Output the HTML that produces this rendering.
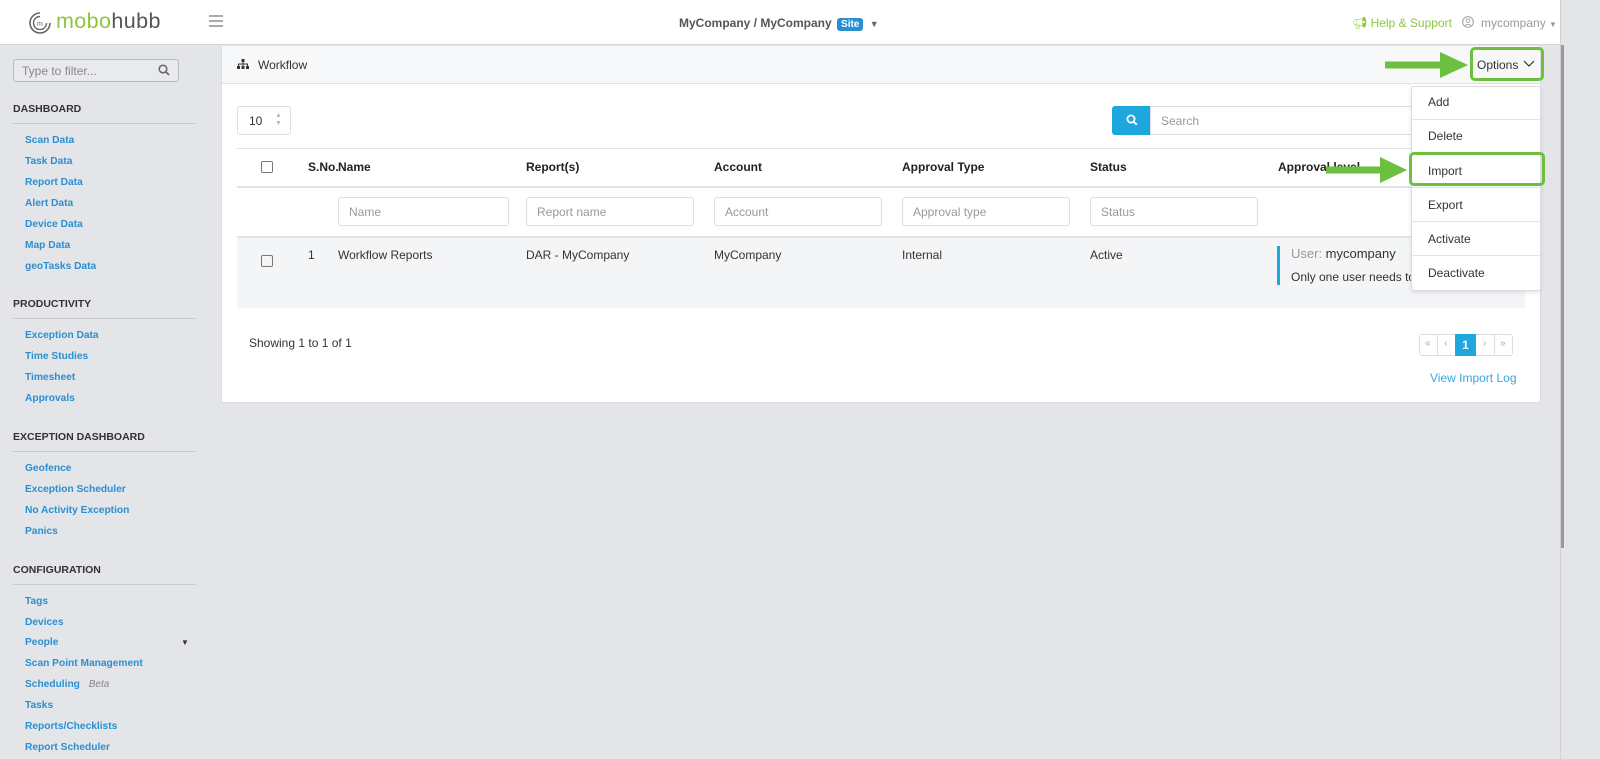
<!DOCTYPE html>
<html><head><meta charset="utf-8">
<style>
*{box-sizing:border-box;margin:0;padding:0}
body{width:1600px;height:759px;overflow:hidden;background:#e4e5e8;font-family:"Liberation Sans",Arial,sans-serif;position:relative;font-size:12px;color:#333}
.a{position:absolute;white-space:nowrap}
.hdr{left:0;top:0;width:1560px;height:45px;background:#fff;border-bottom:1px solid #d4d6da}
.sb a,.lnk{color:#2a8fd0;font-weight:bold;font-size:10.2px;text-decoration:none}
.sh{font-weight:bold;font-size:10.5px;color:#333}
.hl{height:1px;background:#c9cbcf;width:183px;left:13px}
.th{font-weight:bold;font-size:12px;color:#222}
.inp{height:29px;border:1px solid #dcdde0;border-radius:3px;background:#fff;color:#999;padding:7px 10px;font-size:12px}
.dd{font-size:12px;color:#333;left:1428px}
.sep{left:1412px;width:129px;height:1px;background:#e2e3e6}
</style></head><body>
<div class="a hdr"></div>
<svg class="a" style="left:28px;top:11px" width="24" height="24" viewBox="0 0 24 24"><path d="M12 2a10 10 0 1 0 10 10" fill="none" stroke="#666" stroke-width="1.6"/><path d="M12 5.5a6.5 6.5 0 1 0 6.5 6.5" fill="none" stroke="#666" stroke-width="1.4"/><text x="9" y="15" font-size="7" fill="#666" font-family="Liberation Sans">m</text></svg>
<div class="a" style="left:56px;top:9px;font-size:21.5px;letter-spacing:0.4px"><span style="color:#8cc63f">mobo</span><span style="color:#555">hubb</span></div>
<div class="a" style="left:209px;top:15px;width:14px;height:2px;background:#aaa;box-shadow:0 5px 0 #aaa,0 10px 0 #aaa"></div>
<div class="a" style="left:679px;top:16px;font-size:12px;font-weight:bold;color:#555">MyCompany / MyCompany <span style="background:#2a8fd0;color:#fff;border-radius:3px;padding:1px 4px;font-size:10px;margin-left:2px">Site</span> <span style="color:#666;font-size:9px;margin-left:3px">▼</span></div>
<div class="a" style="left:1352px;top:16px;color:#8cc63f;font-size:12px">📢︎ Help &amp; Support</div>
<svg class="a" style="left:1462px;top:16px" width="12" height="12" viewBox="0 0 12 12"><circle cx="6" cy="6" r="5.3" fill="none" stroke="#aaa" stroke-width="1.2"/><circle cx="6" cy="4.8" r="1.8" fill="none" stroke="#aaa"/><path d="M2.8 10c1-2 5.4-2 6.4 0" fill="none" stroke="#aaa"/></svg>
<div class="a" style="left:1481px;top:16px;color:#999;font-size:12px">mycompany <span style="font-size:8px">▼</span></div>
<div class="a" style="left:1560px;top:0;width:40px;height:759px;background:#e4e5e8;border-left:1px solid #d0d0d0"></div>
<div class="a" style="left:1561px;top:45px;width:3px;height:503px;background:#999"></div>

<div class="a" style="left:13px;top:59px;width:166px;height:23px;border:1px solid #b8babe;border-radius:3px;background:#e9eaed;color:#888;font-size:12px;padding:4px 8px">Type to filter...</div>
<svg class="a" style="left:158px;top:64px" width="12" height="12" viewBox="0 0 12 12"><circle cx="5" cy="5" r="3.8" fill="none" stroke="#666" stroke-width="1.5"/><path d="M8 8l3 3" stroke="#666" stroke-width="1.6"/></svg>
<div class="sb">
<div class="a sh" style="left:13px;top:103px">DASHBOARD</div><div class="a hl" style="top:123px"></div>
<a class="a" style="left:25px;top:135px">Scan Data</a><a class="a" style="left:25px;top:156px">Task Data</a><a class="a" style="left:25px;top:177px">Report Data</a><a class="a" style="left:25px;top:198px">Alert Data</a><a class="a" style="left:25px;top:219px">Device Data</a><a class="a" style="left:25px;top:240px">Map Data</a><a class="a" style="left:25px;top:261px">geoTasks Data</a>
<div class="a sh" style="left:13px;top:298px">PRODUCTIVITY</div><div class="a hl" style="top:318px"></div>
<a class="a" style="left:25px;top:330px">Exception Data</a><a class="a" style="left:25px;top:351px">Time Studies</a><a class="a" style="left:25px;top:372px">Timesheet</a><a class="a" style="left:25px;top:393px">Approvals</a>
<div class="a sh" style="left:13px;top:431px">EXCEPTION DASHBOARD</div><div class="a hl" style="top:451px"></div>
<a class="a" style="left:25px;top:463px">Geofence</a><a class="a" style="left:25px;top:484px">Exception Scheduler</a><a class="a" style="left:25px;top:505px">No Activity Exception</a><a class="a" style="left:25px;top:526px">Panics</a>
<div class="a sh" style="left:13px;top:564px">CONFIGURATION</div><div class="a hl" style="top:584px"></div>
<a class="a" style="left:25px;top:596px">Tags</a><a class="a" style="left:25px;top:617px">Devices</a><a class="a" style="left:25px;top:637px">People</a><a class="a" style="left:25px;top:658px">Scan Point Management</a><a class="a" style="left:25px;top:679px">Scheduling <i style="color:#888;font-weight:normal;font-size:10px;margin-left:6px">Beta</i></a><a class="a" style="left:25px;top:700px">Tasks</a><a class="a" style="left:25px;top:721px">Reports/Checklists</a><a class="a" style="left:25px;top:742px">Report Scheduler</a>
<div class="a" style="left:181px;top:638px;font-size:8px;color:#333">▼</div>
</div>

<div class="a" style="left:221px;top:46px;width:1320px;height:357px;background:#fff;border:1px solid #dcdde0;border-radius:3px"></div>
<div class="a" style="left:222px;top:46px;width:1318px;height:38px;background:#f7f8fa;border-bottom:1px solid #e0e1e4"></div>
<svg class="a" style="left:237px;top:59px" width="12" height="11" viewBox="0 0 12 11"><rect x="4.5" y="0" width="3" height="3" fill="#333"/><rect x="0" y="7" width="3" height="3" fill="#333"/><rect x="4.5" y="7" width="3" height="3" fill="#333"/><rect x="9" y="7" width="3" height="3" fill="#333"/><path d="M1.5 7V5h9v2M6 3v4" fill="none" stroke="#333"/></svg>
<div class="a" style="left:258px;top:58px;font-size:12px;color:#333">Workflow</div>
<div class="a" style="left:1477px;top:58px;font-size:12px;color:#333">Options</div>
<svg class="a" style="left:1523px;top:60px" width="12" height="8" viewBox="0 0 12 8"><path d="M1 1l5 5 5-5" fill="none" stroke="#333" stroke-width="1.2"/></svg>

<div class="a" style="left:237px;top:106px;width:54px;height:29px;border:1px solid #dcdde0;border-radius:3px;padding:7px 11px;font-size:12px">10<span style="position:absolute;left:37px;top:5px;font-size:7px;color:#bbb;line-height:8px">▲<br>▼</span></div>
<div class="a" style="left:1112px;top:106px;width:39px;height:29px;background:#1ea7dd;border-radius:3px 0 0 3px"></div>
<svg class="a" style="left:1126px;top:114px" width="12" height="12" viewBox="0 0 12 12"><circle cx="5" cy="5" r="3.6" fill="none" stroke="#fff" stroke-width="1.8"/><path d="M7.8 7.8l3 3" stroke="#fff" stroke-width="2"/></svg>
<div class="a" style="left:1150px;top:106px;width:280px;height:29px;border:1px solid #dcdde0;padding:7px 10px;color:#999;font-size:12px">Search</div>

<div class="a" style="left:237px;top:148px;width:1288px;height:1px;background:#e2e3e6"></div>
<div class="a" style="left:237px;top:186px;width:1288px;height:2px;background:#e2e3e6"></div>
<div class="a" style="left:237px;top:236px;width:1288px;height:2px;background:#e2e3e6"></div>
<div class="a" style="left:237px;top:238px;width:1288px;height:70px;background:#f4f5f7"></div>
<div class="a" style="left:261px;top:161px;width:12px;height:12px;border:1.5px solid #777;border-radius:2px"></div>
<div class="a" style="left:261px;top:255px;width:12px;height:12px;border:1.5px solid #777;border-radius:2px"></div>
<div class="a th" style="left:308px;top:160px">S.No.</div>
<div class="a th" style="left:338px;top:160px">Name</div>
<div class="a th" style="left:526px;top:160px">Report(s)</div>
<div class="a th" style="left:714px;top:160px">Account</div>
<div class="a th" style="left:902px;top:160px">Approval Type</div>
<div class="a th" style="left:1090px;top:160px">Status</div>
<div class="a th" style="left:1278px;top:160px">Approval level</div>
<div class="a inp" style="left:338px;top:197px;width:171px">Name</div>
<div class="a inp" style="left:526px;top:197px;width:168px">Report name</div>
<div class="a inp" style="left:714px;top:197px;width:168px">Account</div>
<div class="a inp" style="left:902px;top:197px;width:168px">Approval type</div>
<div class="a inp" style="left:1090px;top:197px;width:168px">Status</div>
<div class="a" style="left:308px;top:248px">1</div>
<div class="a" style="left:338px;top:248px">Workflow Reports</div>
<div class="a" style="left:526px;top:248px">DAR - MyCompany</div>
<div class="a" style="left:714px;top:248px">MyCompany</div>
<div class="a" style="left:902px;top:248px">Internal</div>
<div class="a" style="left:1090px;top:248px">Active</div>
<div class="a" style="left:1277px;top:246px;width:3px;height:39px;background:#1ea7dd"></div>
<div class="a" style="left:1291px;top:246px;font-size:13px;color:#999">User: <span style="color:#333">mycompany</span></div>
<div class="a" style="left:1291px;top:270px">Only one user needs to a</div>

<div class="a" style="left:249px;top:336px">Showing 1 to 1 of 1</div>
<div class="a" style="left:1419px;top:334px;width:94px;height:22px;border:1px solid #dcdde0;border-radius:3px;background:#fff"></div>
<div class="a" style="left:1437px;top:334px;width:1px;height:22px;background:#dcdde0"></div>
<div class="a" style="left:1494px;top:334px;width:1px;height:22px;background:#dcdde0"></div>
<div class="a" style="left:1455px;top:334px;width:21px;height:22px;background:#1ea7dd;color:#fff;font-weight:bold;text-align:center;padding-top:4px">1</div>
<div class="a" style="left:1425px;top:338px;color:#aaa;font-size:10px">«</div>
<div class="a" style="left:1444px;top:338px;color:#aaa;font-size:10px">‹</div>
<div class="a" style="left:1483px;top:338px;color:#aaa;font-size:10px">›</div>
<div class="a" style="left:1500px;top:338px;color:#aaa;font-size:10px">»</div>
<div class="a lnk" style="left:1430px;top:371px;font-weight:normal;font-size:12px;color:#3aa6dd">View Import Log</div>

<div class="a" style="left:1411px;top:86px;width:130px;height:205px;background:#fff;border:1px solid #dcdde0;border-radius:3px;box-shadow:0 2px 4px rgba(0,0,0,.1)"></div>
<div class="a sep" style="top:119px"></div><div class="a sep" style="top:153px"></div><div class="a sep" style="top:187px"></div><div class="a sep" style="top:221px"></div><div class="a sep" style="top:255px"></div>
<div class="a dd" style="top:95px">Add</div>
<div class="a dd" style="top:129px">Delete</div>
<div class="a dd" style="top:164px">Import</div>
<div class="a dd" style="top:198px">Export</div>
<div class="a dd" style="top:232px">Activate</div>
<div class="a dd" style="top:266px">Deactivate</div>

<div class="a" style="left:1470px;top:47px;width:74px;height:34px;border:3px solid #6cbf3f;border-radius:5px"></div>
<div class="a" style="left:1409px;top:152px;width:136px;height:34px;border:3px solid #6cbf3f;border-radius:5px"></div>
<svg class="a" style="left:1385px;top:52px" width="84" height="26" viewBox="0 0 84 26"><path d="M0 9.5h55V0l28 13-28 13v-9.5H0z" fill="#6cbf3f"/></svg>
<svg class="a" style="left:1326px;top:157px" width="82" height="26" viewBox="0 0 82 26"><path d="M0 9.5h54V0l27 13-27 13v-9.5H0z" fill="#6cbf3f"/></svg>
</body></html>
